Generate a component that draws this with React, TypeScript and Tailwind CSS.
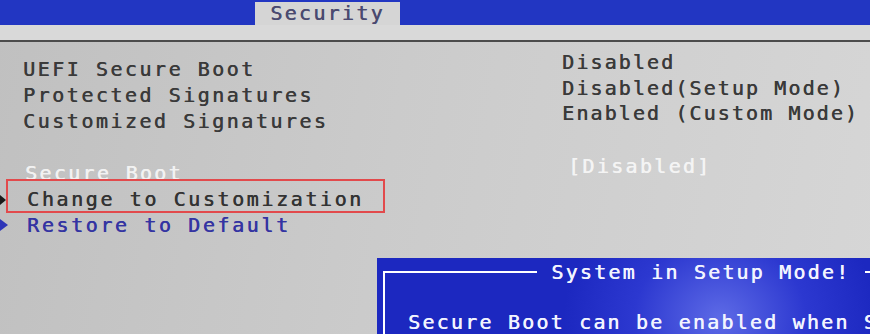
export default function App() {
  return (
    <div className="relative w-[870px] h-[334px] overflow-hidden bg-[linear-gradient(100deg,#c0c0c0_0%,#cbcbcb_45%,#d6d6d6_100%)] font-['DejaVu_Sans_Mono',monospace] text-[20px] tracking-[2.3px] text-[#3a3a3a] [text-shadow:0.5px_0_0_currentColor]">
      {/* top menu bar */}
      <header className="h-[25px] bg-[#2236c2] pl-[255px] pt-[2px] flex">
        <div className="w-[145px] h-full bg-[#d5d5d5] text-center leading-[23px] text-[#4a4a70]">Security</div>
      </header>
      <div className="h-[15px] bg-[#d9d9d9]" />
      <div className="h-[2px] bg-[#4c4c4c]" />

      <main className="pl-[23px] pt-[14px] leading-[26px]">
        <div className="flex">
          <div className="w-[539px] tracking-[2.5px]">
            <div>UEFI Secure Boot</div>
            <div>Protected Signatures</div>
            <div>Customized Signatures</div>
          </div>
          <div className="-mt-[6px] leading-[25.5px] tracking-[2.1px]">
            <div>Disabled</div>
            <div>Disabled(Setup Mode)</div>
            <div className="whitespace-pre">Enabled (Custom Mode)</div>
          </div>
        </div>

        <div className="mt-[26px] flex">
          <div className="w-[545px] pl-[2px] text-[#f2f2f2]">Secure Boot</div>
          <div className="-mt-[7px] text-[#f4f4f4]">[Disabled]</div>
        </div>

        <div className="-ml-[23px] flex items-center">
          <svg width="6" height="10" viewBox="0 0 6 10" className="mt-[2px]">
            <path d="M0 0 L6 5 L0 10 Z" fill="#1a1a1a" />
          </svg>
          <span className="ml-[21px] tracking-[2.6px] text-[#333]">Change to Customization</span>
        </div>
        <div className="-ml-[23px] flex items-center">
          <svg width="8" height="12" viewBox="0 0 8 12">
            <path d="M0 0 L8 6 L0 12 Z" fill="#2e36b8" />
          </svg>
          <span className="ml-[19px] tracking-[2.6px] text-[#3434a2]">Restore to Default</span>
        </div>
      </main>

      {/* annotation box */}
      <div className="absolute left-[6px] top-[179px] w-[379px] h-[34px] border-2 border-[#e24a4c]" />

      {/* setup mode dialog */}
      <div className="absolute left-[377px] top-[258px] w-[520px] h-[100px] pl-[6px] pt-[1px] bg-[radial-gradient(ellipse_30%_140%_at_66%_60%,#5d6ae6_0%,#2c38d0_55%,#1c28c0_100%)] text-[#f2f4ff] tracking-[2.2px]">
        <fieldset className="border-l-2 border-t-2 border-white h-[120px] pl-[23px]">
          <legend className="ml-[129px] leading-[26px] whitespace-pre"> System in Setup Mode! </legend>
          <div className="pt-[24px] whitespace-nowrap leading-[26px]">Secure Boot can be enabled when System is in User Mode.</div>
        </fieldset>
      </div>
    </div>
  );
}
